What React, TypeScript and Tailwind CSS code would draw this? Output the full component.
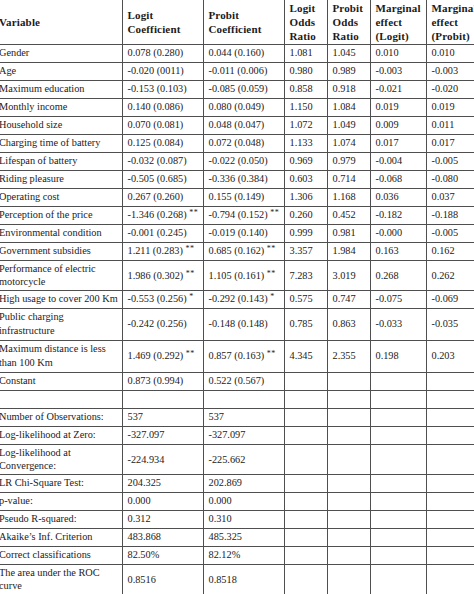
import React from "react";

type Row = {
  v: React.ReactNode;
  c: React.ReactNode[];
  tall?: "a" | "b";
};

const S = ({ s }: { s: string }) => (
  <span className="text-[8px] leading-[0] align-[3px] tracking-[0.5px]">{s}</span>
);

const n = (a: string, star?: string) => (
  <>
    {a}
    {star ? (
      <>
        {" "}
        <S s={star} />
      </>
    ) : null}
  </>
);

const rows: Row[] = [
  { v: "Gender", c: ["0.078 (0.280)", "0.044 (0.160)", "1.081", "1.045", "0.010", "0.010"] },
  { v: "Age", c: ["-0.020 (0011)", "-0.011 (0.006)", "0.980", "0.989", "-0.003", "-0.003"] },
  { v: "Maximum education", c: ["-0.153 (0.103)", "-0.085 (0.059)", "0.858", "0.918", "-0.021", "-0.020"] },
  { v: "Monthly income", c: ["0.140 (0.086)", "0.080 (0.049)", "1.150", "1.084", "0.019", "0.019"] },
  { v: "Household size", c: ["0.070 (0.081)", "0.048 (0.047)", "1.072", "1.049", "0.009", "0.011"] },
  { v: "Charging time of battery", c: ["0.125 (0.084)", "0.072 (0.048)", "1.133", "1.074", "0.017", "0.017"] },
  { v: "Lifespan of battery", c: ["-0.032 (0.087)", "-0.022 (0.050)", "0.969", "0.979", "-0.004", "-0.005"] },
  { v: "Riding pleasure", c: ["-0.505 (0.685)", "-0.336 (0.384)", "0.603", "0.714", "-0.068", "-0.080"] },
  { v: "Operating cost", c: ["0.267 (0.260)", "0.155 (0.149)", "1.306", "1.168", "0.036", "0.037"] },
  { v: "Perception of the price", c: [n("-1.346 (0.268)", "**"), n("-0.794 (0.152)", "**"), "0.260", "0.452", "-0.182", "-0.188"] },
  { v: "Environmental condition", c: ["-0.001 (0.245)", "-0.019 (0.140)", "0.999", "0.981", "-0.000", "-0.005"] },
  { v: "Government subsidies", c: [n("1.211 (0.283)", "**"), n("0.685 (0.162)", "**"), "3.357", "1.984", "0.163", "0.162"] },
  {
    v: (
      <>
        Performance of electric
        <br />
        motorcycle
      </>
    ),
    c: [n("1.986 (0.302)", "**"), n("1.105 (0.161)", "**"), "7.283", "3.019", "0.268", "0.262"],
    tall: "a",
  },
  { v: "High usage to cover 200 Km", c: [n("-0.553 (0.256)", "*"), n("-0.292 (0.143)", "*"), "0.575", "0.747", "-0.075", "-0.069"] },
  {
    v: (
      <>
        Public charging
        <br />
        infrastructure
      </>
    ),
    c: ["-0.242 (0.256)", "-0.148 (0.148)", "0.785", "0.863", "-0.033", "-0.035"],
    tall: "b",
  },
  {
    v: (
      <>
        Maximum distance is less
        <br />
        than 100 Km
      </>
    ),
    c: [n("1.469 (0.292)", "**"), n("0.857 (0.163)", "**"), "4.345", "2.355", "0.198", "0.203"],
    tall: "b",
  },
  { v: "Constant", c: ["0.873 (0.994)", "0.522 (0.567)", "", "", "", ""] },
  { v: "", c: ["", "", "", "", "", ""] },
  { v: "Number of Observations:", c: ["537", "537", "", "", "", ""] },
  { v: "Log-likelihood at Zero:", c: ["-327.097", "-327.097", "", "", "", ""] },
  {
    v: (
      <>
        Log-likelihood at
        <br />
        Convergence:
      </>
    ),
    c: ["-224.934", "-225.662", "", "", "", ""],
    tall: "a",
  },
  { v: "LR Chi-Square Test:", c: ["204.325", "202.869", "", "", "", ""] },
  { v: "p-value:", c: ["0.000", "0.000", "", "", "", ""] },
  { v: "Pseudo R-squared:", c: ["0.312", "0.310", "", "", "", ""] },
  { v: "Akaike\u2019s Inf. Criterion", c: ["483.868", "485.325", "", "", "", ""] },
  { v: "Correct classifications", c: ["82.50%", "82.12%", "", "", "", ""] },
  {
    v: (
      <>
        The area under the ROC
        <br />
        curve
      </>
    ),
    c: ["0.8516", "0.8518", "", "", "", ""],
    tall: "a",
  },
];

const headers: React.ReactNode[] = [
  <>
    Logit
    <br />
    Coefficient
  </>,
  <>
    Probit
    <br />
    Coefficient
  </>,
  <>
    Logit
    <br />
    Odds
    <br />
    Ratio
  </>,
  <>
    Probit
    <br />
    Odds
    <br />
    Ratio
  </>,
  <>
    Marginal
    <br />
    effect
    <br />
    (Logit)
  </>,
  <>
    Marginal
    <br />
    effect
    <br />
    (Probit)
  </>,
];

export default function App() {
  return (
    <div className="w-[474px] h-[594px] overflow-hidden bg-white">
      <table className="ml-[-1px] w-[483px] table-fixed border-collapse font-['Liberation_Serif',serif] text-[#1c1a1b]">
        <colgroup>
          <col className="w-[123px]" />
          <col className="w-[81px]" />
          <col className="w-[81px]" />
          <col className="w-[43px]" />
          <col className="w-[43px]" />
          <col className="w-[56px]" />
          <col className="w-[56px]" />
        </colgroup>
        <thead>
          <tr>
            <th className="h-[44px] border-b border-[#4f4f4f] pl-0 py-0 text-left align-middle text-[11px] font-bold leading-[14px] tracking-[0.15px]">
              Variable
            </th>
            {headers.map((h, i) => (
              <th
                key={i}
                className="h-[44px] border-b border-l border-[#4f4f4f] pl-[5px] pr-0 py-0 text-left align-middle text-[11px] font-bold leading-[14px] tracking-[0.15px] whitespace-nowrap"
              >
                {h}
              </th>
            ))}
          </tr>
        </thead>
        <tbody>
          {rows.map((r, ri) => {
            const lead =
              r.tall === "a"
                ? "leading-[13px] py-[1.5px]"
                : r.tall === "b"
                ? "leading-[14px] py-[1.5px]"
                : "leading-[14px] py-[1.5px]";
            return (
              <tr key={ri}>
                <td
                  className={`border-b border-[#4f4f4f] pl-0 pr-0 text-left align-middle text-[10.3px] whitespace-nowrap ${lead}`}
                >
                  {r.v === "" ? "\u00a0" : r.v}
                </td>
                {r.c.map((c, ci) => (
                  <td
                    key={ci}
                    className={`border-b border-l border-[#4f4f4f] pl-[5px] pr-0 text-left align-middle text-[10.3px] whitespace-nowrap ${lead}`}
                  >
                    {c === "" ? "\u00a0" : c}
                  </td>
                ))}
              </tr>
            );
          })}
        </tbody>
      </table>
    </div>
  );
}
